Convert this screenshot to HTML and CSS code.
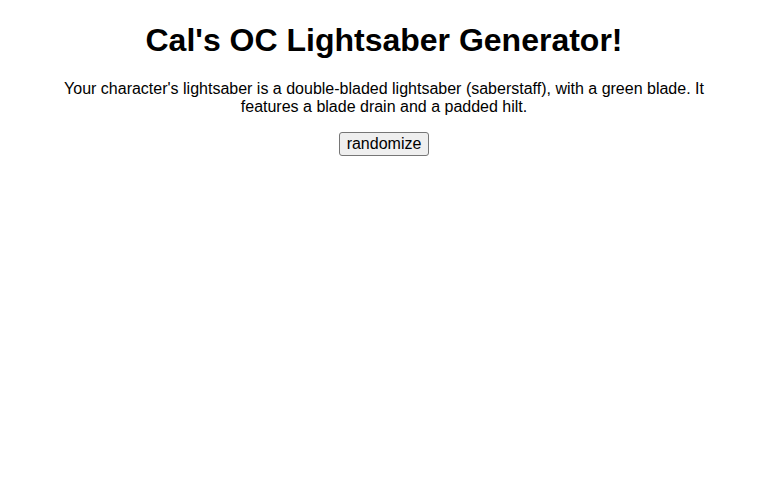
FILE: index.html
```html
<!DOCTYPE html>
<html>
<head>
<meta charset="utf-8">
<link rel="stylesheet" href="styles.css">
</head>
<body class="page">
<main class="content">
<h1 class="title">Cal's OC Lightsaber Generator!</h1>
<p class="result">Your character's lightsaber is a double-bladed lightsaber (saberstaff), with a green blade. It features a blade drain and a padded hilt.</p>
<button class="randomize">randomize</button>
</main>
</body>
</html>
```
FILE: styles.css
```css
.page {
  margin: 0 8px;
  font-family: "Liberation Sans", Arial, sans-serif;
  text-align: center;
  color: #000;
  background: #fff;
}
.content {
  max-width: 660px;
  margin: 0 auto;
  padding-top: 0.1px;
}
.title {
  font-size: 32px;
  font-weight: bold;
  margin: 21.44px 0;
}
.result {
  font-size: 16px;
  margin: 16px 0;
}
.randomize {
  font-family: "Liberation Sans", Arial, sans-serif;
  font-size: 16px;
  color: #000;
  background: #efefef;
  border: 1px solid #767676;
  border-radius: 3px;
  padding: 2px 7px;
}
```
